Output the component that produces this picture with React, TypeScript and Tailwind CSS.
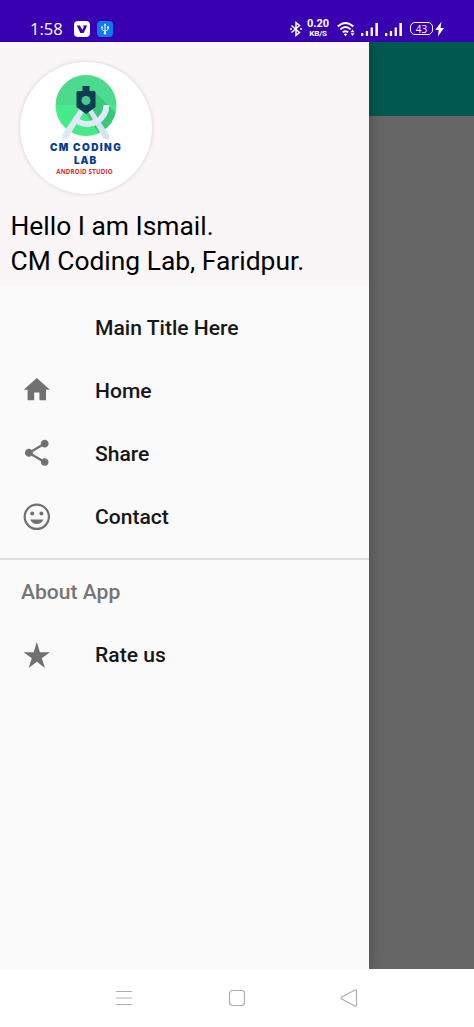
import type { ReactNode } from 'react';

function StatusBar() {
  return (
    <header className="flex h-[42px] shrink-0 items-end bg-[#3900b1] pr-[30px] pb-[5px] pl-[30px] text-white">
      <div className="flex h-4 items-center">
        <span className="w-[43px] text-[16.5px] leading-4 whitespace-nowrap font-['Open_Sans',sans-serif]">1:58</span>
        <svg className="ml-[1px] h-4 w-4" viewBox="0 0 16 16">
          <rect width="16" height="16" rx="4" fill="#fff" />
          <path d="M2.800 4.400H6L8.200 9l1.600-3.100-.8-1.500h4.200L9.600 12H6.400z" fill="#3900b1" />
        </svg>
        <svg className="ml-[7px] h-4 w-4" viewBox="0 0 16 16">
          <rect width="16" height="16" rx="4" fill="#087bf5" />
          <path d="M8 3.500v9M5 6.500v2l3 2 3-2v-2" fill="none" stroke="#fff" strokeWidth="1" />
          <path d="M8 2.300 6.700 4.500h2.600z" fill="#fff" />
          <circle cx="5" cy="6.300" r="1" fill="#fff" />
          <circle cx="8" cy="12.200" r="1.200" fill="#fff" />
          <rect x="10" y="5.300" width="2" height="2" fill="#fff" />
        </svg>
      </div>
      <div className="ml-auto flex h-[17px] items-center">
        <svg className="h-4 w-3" viewBox="0 0 12 16" fill="none" stroke="#fff" strokeWidth="1.500">
          <path d="m1.500 4.500 8 7L6 14.400V1.600l3.500 2.900-8 7" />
          <path d="M0 8h2M10 8h2" />
        </svg>
        <div className="ml-[4px] flex h-[17px] w-[24px] flex-col items-center justify-between font-bold whitespace-nowrap font-[Roboto,sans-serif]">
          <span className="h-[9px] text-[11px] leading-[8px]">0.20</span>
          <span className="h-[7px] text-[8px] leading-[8px] tracking-[-0.200px]">KB/S</span>
        </div>
        <svg className="ml-[7px] h-4 w-[18px]" viewBox="0 0 18 16" fill="none" stroke="#fff" strokeWidth="1.900">
          <path d="M.7 5.500Q8.500-1.500 16.300 5.500" />
          <path d="M3.300 8.400q5.200-4.600 10.400 0" />
          <path d="M5.800 11.200q2.700-2.100 5.400 0" />
          <path d="m8.500 15.200-1.800-2q1.800-1.300 3.600 0z" fill="#fff" stroke="none" />
          <path d="m15.500 8.500 2 2.800h-4zM13.500 12.300h4l-2 2.800z" fill="#fff" stroke="none" />
        </svg>
        <svg className="ml-[6px] h-4 w-[18px]" viewBox="0 0 18 16" fill="#fff">
          <path d="M0 12h2.300v3H0zM4.800 10h2.300v5H4.800zM9.600 6.500h2.300V15H9.600zM14.400 2h2.500v13h-2.500z" />
        </svg>
        <svg className="ml-[6px] h-4 w-[18px]" viewBox="0 0 18 16" fill="#fff">
          <path d="M0 12h2.300v3H0zM4.800 10h2.300v5H4.800zM9.600 6.500h2.300V15H9.600zM14.400 2h2.500v13h-2.500z" />
        </svg>
        <span className="ml-[7px] flex h-[13px] w-[23px] items-center justify-center rounded-[5px] border-[1.500px] border-white text-[10px] leading-none font-['Open_Sans',sans-serif]">43</span>
        <svg className="ml-[2px] h-4 w-[9px]" viewBox="0 0 9 16" fill="#fff">
          <path d="M6.400.8.2 9h3.500L2.800 15.500 9 7H5.500z" />
        </svg>
      </div>
    </header>
  );
}

function Logo() {
  return (
    <div className="flex h-[132px] w-[132px] flex-col items-center rounded-full bg-white pt-[12px] shadow-[0_0_4px_rgba(0,0,0,0.16)]">
      <svg className="h-[68px] w-[64px] shrink-0" viewBox="0 0 64 68">
        <defs>
          <clipPath id="disc"><circle cx="32" cy="31.500" r="30.500" /></clipPath>
        </defs>
        <g clipPath="url(#disc)">
          <path d="M0 0h64v31H0z" fill="#4cdb8c" />
          <path d="M0 31h64v33H0z" fill="#45eb88" />
          <path d="M38 15 64 41v23H48L32 40z" fill="#39c878" />
        </g>
        <path d="M26 34 8 61l.5 5 5.500-2 17-28z" fill="#dfe9f8" />
        <path d="M38 35 55 61v5l-6-2-15-27z" fill="#d7e2f0" />
        <path d="M52.500 31c-.5 15-16 24-29.500 16" fill="none" stroke="#dfe9f8" strokeWidth="6" />
        <path d="M28.500 12h7v5h4.500q1.500 0 1.500 1.500V33L32 40l-9.500-7V18.500Q22.500 17 24 17h4.500z" fill="#113b52" />
        <circle cx="32" cy="26.500" r="4.500" fill="#43cc88" />
      </svg>
      <span className="mt-[-1px] pl-[1px] text-[10px] leading-[13.500px] font-black tracking-[1.400px] whitespace-nowrap text-[#073b96] font-['Inter',sans-serif]">CM CODING</span>
      <span className="text-[10px] leading-[12.500px] font-black tracking-[0.900px] text-[#073b96] font-['Inter',sans-serif]">LAB</span>
      <span className="mr-[2px] text-[6.200px] leading-[9px] font-bold tracking-[0.150px] whitespace-nowrap text-[#d62932] font-['Open_Sans',sans-serif]">ANDROID STUDIO</span>
    </div>
  );
}

function MenuItem({ label, children }: { label: string; children?: ReactNode }) {
  return (
    <li className="flex h-[63.200px] items-center pl-[21px]">
      <svg className="h-[31.600px] w-[31.600px] shrink-0" viewBox="0 0 24 24" fill="#717171">{children}</svg>
      <span className="ml-[42.400px] pt-[1px] text-[21.100px] font-medium text-[#171717]">{label}</span>
    </li>
  );
}

function Drawer() {
  return (
    <aside className="flex w-[369px] shrink-0 flex-col bg-[#fafafa] font-[Roboto,sans-serif] shadow-[0_0_14px_rgba(0,0,0,0.3)]">
      <div className="h-[243px] bg-[#faf6f8] pt-[19.500px]">
        <div className="pl-[19.500px]"><Logo /></div>
        <p className="mt-[15px] pl-[10.500px] text-[26.400px] leading-[35.500px] whitespace-nowrap text-black">
          Hello I am Ismail.<br />CM Coding Lab, Faridpur.
        </p>
      </div>
      <ul className="pt-[10.300px]">
        <MenuItem label="Main Title Here" />
        <MenuItem label="Home"><path d="M10 20v-6h4v6h5v-8h3L12 3 2 12h3v8z" /></MenuItem>
        <MenuItem label="Share">
          <path d="M18 16.080c-.76 0-1.440.3-1.960.77L8.910 12.700c.05-.23.09-.46.09-.7s-.04-.47-.09-.7l7.050-4.110c.54.5 1.250.81 2.040.81 1.660 0 3-1.340 3-3s-1.340-3-3-3-3 1.340-3 3c0 .24.04.47.09.7L8.040 9.810C7.500 9.310 6.790 9 6 9c-1.660 0-3 1.340-3 3s1.340 3 3 3c.79 0 1.500-.31 2.040-.81l7.120 4.160c-.05.21-.08.43-.08.65 0 1.610 1.310 2.920 2.920 2.920s2.920-1.310 2.920-2.920-1.310-2.920-2.920-2.920z" />
        </MenuItem>
        <MenuItem label="Contact">
          <circle cx="12" cy="12" r="9.200" fill="none" stroke="#717171" strokeWidth="1.700" />
          <circle cx="8.500" cy="9.500" r="1.500" />
          <circle cx="15.500" cy="9.500" r="1.500" />
          <path d="M6.900 14h10.200c-.8 2.050-2.770 3.500-5.100 3.500S7.700 16.050 6.900 14z" />
        </MenuItem>
      </ul>
      <div className="mt-[10.200px] h-[1.500px] bg-[#dfdfdf]" />
      <h2 className="flex h-[63.200px] items-center pt-[1px] pl-[21px] text-[21.100px] font-medium text-[#757575]">About App</h2>
      <ul>
        <MenuItem label="Rate us"><path d="m12 17.270 6.180 4.730-2.350-7.460L22 10h-7.640L12 2l-2.360 8H2l6.170 4.540L5.820 22z" /></MenuItem>
      </ul>
    </aside>
  );
}

export default function App() {
  return (
    <div className="flex h-[1027px] w-[474px] flex-col overflow-hidden bg-white">
      <StatusBar />
      <main className="flex h-[927px] shrink-0 overflow-hidden bg-[linear-gradient(to_bottom,#00594f_74px,#666_74px)]">
        <Drawer />
      </main>
      <nav className="flex flex-1 items-center justify-between pr-[116px] pl-[115px]">
        <svg className="h-5 w-[18px]" viewBox="0 0 18 20" stroke="#adadad" strokeWidth="1.200"><path d="M1 3.500h16M1 10h16M1 16.500h16" /></svg>
        <svg className="h-5 w-[18px]" viewBox="0 0 18 20" fill="none" stroke="#adadad" strokeWidth="1.200"><rect x="1.500" y="2.500" width="15" height="15" rx="3" /></svg>
        <svg className="h-5 w-[18px]" viewBox="0 0 18 20" fill="none" stroke="#adadad" strokeWidth="1.200" strokeLinejoin="round"><path d="M1.700 9 15 2q1.500-.8 1.500 1v14q0 1.800-1.500 1L1.700 11q-1-1 0-2z" /></svg>
      </nav>
    </div>
  );
}
